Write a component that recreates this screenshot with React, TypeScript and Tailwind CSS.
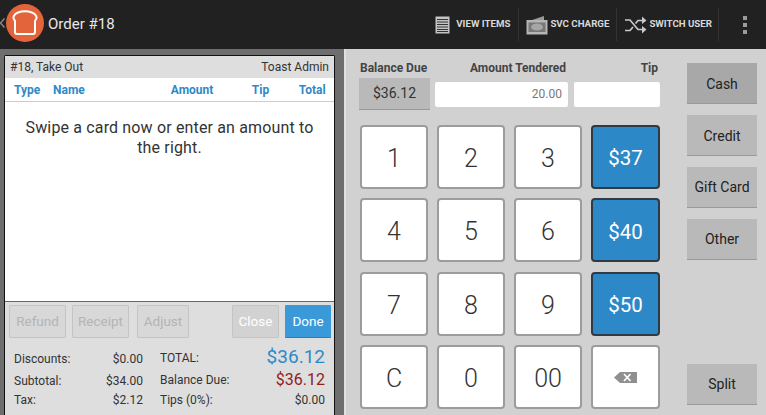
import React from 'react';

const font = { fontFamily: 'Roboto, sans-serif' };

const keys = ['1', '2', '3', '$37', '4', '5', '6', '$40', '7', '8', '9', '$50', 'C', '0', '00', 'back'];

const TenderButton: React.FC<{ label: string; dark?: boolean; className?: string }> = ({ label, dark, className = '' }) => (
  <div
    className={`w-[70px] h-[41px] flex items-center justify-center text-[14px] text-[#222] border-b border-[#999] ${
      dark ? 'bg-[#a8a8a8]' : 'bg-[#b9b9b9]'
    } ${className}`}
  >
    {label}
  </div>
);

const ToastLogo = () => (
  <div className="absolute left-[6px] top-[4px] w-[38px] h-[38px] rounded-full bg-[#e3633a] flex items-center justify-center">
    <svg width="28" height="26" viewBox="0 0 28 26" fill="none">
      <path
        d="M7 2.5C11 1 17 1 21 2.5C25.5 4 26.5 8 24.5 10C24 10.5 24 11 24 12L24 22C24 23.5 23.5 24 22 24L6 24C4.5 24 4 23.5 4 22L4 12C4 11 4 10.5 3.5 10C1.5 8 2.5 4 7 2.5Z"
        stroke="#fff"
        strokeWidth="2"
      />
    </svg>
  </div>
);

const ListIcon = () => (
  <svg width="15" height="18" viewBox="0 0 15 18" className="mr-[6px]">
    <rect x="0.5" y="0.5" width="14" height="17" fill="#c4c4c4" />
    {[3, 5.5, 8, 10.5, 13, 15].map(y => (
      <rect key={y} x="2" y={y} width="11" height="1" fill="#333" />
    ))}
  </svg>
);

const MoneyIcon = () => (
  <svg width="22" height="20" viewBox="0 0 22 20">
    <path d="M6 5L18 1V5Z" fill="#9a9a9a" />
    <rect x="0.5" y="5" width="21" height="14.5" fill="#b5b5b5" />
    <rect x="2.5" y="7.5" width="17" height="9.5" fill="#777" />
    <ellipse cx="11" cy="12" rx="6" ry="3.5" fill="#a6a6a6" />
  </svg>
);

const ShuffleIcon = () => (
  <svg width="22" height="18" viewBox="0 0 22 18" fill="none" className="mr-[2px]">
    <path d="M0 4H5L13 13.5H18M0 14.5H5L8 11M10.5 7.5L13 4.5H18" stroke="#c9c9c9" strokeWidth="1.7" />
    <path d="M17 0.5L21.5 4.5L17 8ZM17 10L21.5 13.5L17 17.5Z" fill="#c9c9c9" />
  </svg>
);

const TopAction: React.FC<{ icon: React.ReactNode; label: string; className: string }> = ({ icon, label, className }) => (
  <div className={`h-[33px] flex items-center border-r border-[#333] ${className}`}>
    {icon}
    <span className="text-[9.7px] font-bold text-[#d8d8d8] whitespace-nowrap">{label}</span>
  </div>
);

const GhostButton: React.FC<{ label: string; className: string }> = ({ label, className }) => (
  <div className={`h-[33px] shrink-0 flex items-center justify-center text-[13.5px] text-[#b4b4b4] border border-[#c4c4c4] bg-[#d8d8d8] rounded-[1px] ${className}`}>
    {label}
  </div>
);

const SummaryRow: React.FC<{ label: string; value: string; className?: string }> = ({ label, value, className = '' }) => (
  <div className={`flex justify-between w-full ${className}`}>
    <span>{label}</span>
    <span>{value}</span>
  </div>
);

export default function App() {
  return (
    <div className="w-[766px] h-[415px] overflow-hidden flex flex-col bg-[#d1d1d1]" style={font}>
      {/* Top bar */}
      <div className="relative h-[49px] shrink-0 bg-[#212121] flex items-center">
        <svg width="5" height="10" viewBox="0 0 5 10" fill="none" className="absolute left-0 top-[18px]">
          <path d="M4.5 0.5L0.5 5L4.5 9.5" stroke="#8a8a8a" strokeWidth="1.5" />
        </svg>
        <ToastLogo />
        <span className="ml-[48px] text-[15px] text-[#e8e8e8]">Order #18</span>
        <div className="ml-auto flex items-center">
          <TopAction icon={<ListIcon />} label="VIEW ITEMS" className="pr-[8px]" />
          <TopAction icon={<MoneyIcon />} label="SVC CHARGE" className="pl-[7px] pr-[7px] gap-[2px]" />
          <TopAction icon={<ShuffleIcon />} label="SWITCH USER" className="pl-[8px] pr-[6px]" />
          <div className="w-[47px] flex flex-col items-center gap-[3px] pl-[4px]">
            <span className="w-[4px] h-[4px] bg-[#9a9a9a]" />
            <span className="w-[4px] h-[4px] bg-[#9a9a9a]" />
            <span className="w-[4px] h-[4px] bg-[#9a9a9a]" />
          </div>
        </div>
      </div>

      <div className="flex flex-1 min-h-0">
        {/* Check panel */}
        <div className="w-[346px] shrink-0 bg-[#6e6e6e] pl-[4px] pr-[9px] pt-[6px] border-r-2 border-[#e0e0e0]">
          <div className="h-full flex flex-col border border-[#111] border-b-0 rounded-t-[2px] bg-white">
            <div className="h-[22px] shrink-0 bg-[#dedede] flex items-center justify-between pl-[5px] pr-[5px] text-[12px] text-[#333]">
              <span>#18, Take Out</span>
              <span>Toast Admin</span>
            </div>
            <div className="h-[24px] shrink-0 flex items-center text-[12px] font-bold text-[#2d8ac9] border-b border-[#ccc]">
              <span className="ml-[9px] w-[39px]">Type</span>
              <span>Name</span>
              <span className="ml-[86px] w-[81px]">Amount</span>
              <span className="w-[47px]">Tip</span>
              <span>Total</span>
            </div>
            <div className="flex-1 pt-[16px] px-[12px] text-center text-[16px] tracking-[0.15px] leading-[20px] text-[#333]">
              Swipe a card now or enter an amount to the right.
            </div>
            <div className="h-[114px] shrink-0 bg-[#dedede] border-t border-[#666] pl-[4px] pr-[3px] pt-[3px]">
              <div className="flex items-center">
                <GhostButton label="Refund" className="w-[57px]" />
                <GhostButton label="Receipt" className="w-[57px] ml-[6px]" />
                <GhostButton label="Adjust" className="w-[52px] ml-[8px]" />
                <div className="w-[47px] h-[33px] shrink-0 ml-[43px] flex items-center justify-center text-[13.5px] text-white bg-[#d2d2d2] border border-[#c4c4c4] rounded-[1px]">
                  Close
                </div>
                <div className="w-[46px] h-[33px] shrink-0 ml-[6px] flex items-center justify-center text-[13.5px] text-white bg-[#3a9ad9] border-b border-[#2d7fb8] rounded-[1px]">
                  Done
                </div>
              </div>
              <div className="flex mt-[7px] pl-[5px] pr-[6px] text-[12px] text-[#333]">
                <div className="w-[129px] shrink-0 flex flex-col pt-[5px]">
                  <SummaryRow label="Discounts:" value="$0.00" className="h-[22px]" />
                  <SummaryRow label="Subtotal:" value="$34.00" className="h-[19px]" />
                  <SummaryRow label="Tax:" value="$2.12" />
                </div>
                <div className="flex-1 ml-[17px] flex flex-col">
                  <div className="h-[25px] flex justify-between items-center">
                    <span className="pt-[1px]">TOTAL:</span>
                    <span className="text-[19px] text-[#2d8ac9]">$36.12</span>
                  </div>
                  <div className="h-[20px] flex justify-between items-center">
                    <span>Balance Due:</span>
                    <span className="text-[16px] text-[#8e2318]">$36.12</span>
                  </div>
                  <div className="flex justify-between pt-[1px]">
                    <span>Tips (0%):</span>
                    <span>$0.00</span>
                  </div>
                </div>
              </div>
            </div>
          </div>
        </div>

        {/* Tender panel */}
        <div className="flex-1 flex min-w-0">
          <div className="w-[341px] shrink-0 pl-[13px] pr-[7px]">
            <div className="flex text-[12px] font-bold text-[#444] pt-[10px] h-[29px]">
              <span className="w-[76px] pl-[1px]">Balance Due</span>
              <span className="w-[134px] pl-[35px]">Amount Tendered</span>
              <span className="w-[91px] text-right pr-[2px]">Tip</span>
            </div>
            <div className="flex items-center">
              <div className="w-[71px] h-[32px] flex items-center justify-center text-[14px] text-[#333] bg-[#b9b9b9] border-b border-[#999]">
                $36.12
              </div>
              <div className="w-[133px] h-[25px] ml-[5px] bg-white rounded-[2px] flex items-center justify-end pr-[6px] text-[12px] text-[#777] shrink-0">
                20.00
              </div>
              <div className="w-[86px] h-[25px] ml-[6px] bg-white rounded-[2px] shrink-0" />
            </div>
            <div className="grid grid-cols-[68px_68px_68px_69px] gap-x-[9px] gap-y-[9.4px] auto-rows-[64px] mt-[15px] ml-[1px]">
              {keys.map(key => {
                const isCash = key.startsWith('$');
                return (
                  <div
                    key={key}
                    className={`flex items-center justify-center rounded-[4px] border-2 ${
                      isCash ? 'bg-[#2d88c8] border-[#2f3a42] text-white text-[20.5px]' : 'bg-white border-[#9c9c9c] text-[#333] text-[25px] font-[350]'
                    }`}
                  >
                    {key === 'back' ? (
                      <svg width="23" height="11" viewBox="0 0 23 11">
                        <path d="M6 0H23V11H6L0 5.5Z" fill="#8f8f8f" />
                        <path d="M10 2L16.5 9M16.5 2L10 9" stroke="#fff" strokeWidth="1.7" />
                      </svg>
                    ) : (
                      <span className="mt-[3px]">{key}</span>
                    )}
                  </div>
                );
              })}
            </div>
          </div>
          <div className="flex-1 flex flex-col items-start pt-[14px] pb-[10px]">
            <TenderButton label="Cash" dark className="mb-[11px] pt-[2px]" />
            <TenderButton label="Credit" className="mb-[11px] pt-[2px]" />
            <TenderButton label="Gift Card" className="mb-[11px]" />
            <TenderButton label="Other" />
            <TenderButton label="Split" className="mt-auto" />
          </div>
        </div>
      </div>
    </div>
  );
}
